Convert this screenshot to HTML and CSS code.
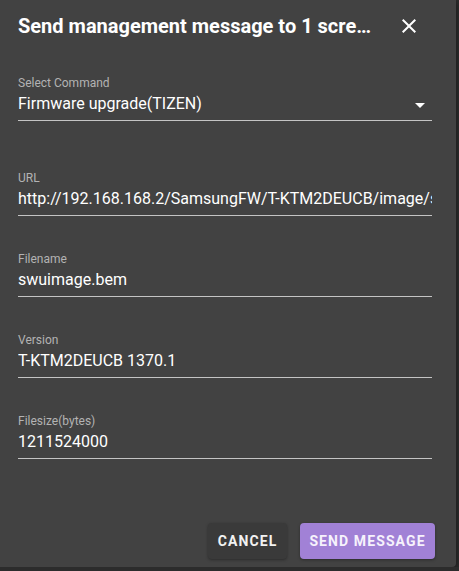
FILE: index.html
```html
<!DOCTYPE html>
<html>
<head>
<meta charset="utf-8">
<link rel="stylesheet" href="styles.css">
</head>
<body>
<div class="dialog">
  <div class="title-row">
    <div class="title">Send management message to 1 screens</div>
    <svg class="close" viewBox="0 0 24 24" width="24" height="24"><path d="M19 6.41L17.59 5 12 10.59 6.41 5 5 6.41 10.59 12 5 17.59 6.41 19 12 13.41 17.59 19 19 17.59 13.41 12z" fill="#fff"/></svg>
  </div>
  <div class="content">
    <div class="field select">
      <div class="label">Select Command</div>
      <div class="value">Firmware upgrade(TIZEN)</div>
      <svg class="arrow" viewBox="0 0 24 24" width="24" height="24"><path d="M7 10l5 5 5-5z" fill="#fff"/></svg>
    </div>
    <div class="field first">
      <div class="label">URL</div>
      <div class="value">http://192.168.168.2/SamsungFW/T-KTM2DEUCB/image/swuimage.bem</div>
    </div>
    <div class="field">
      <div class="label">Filename</div>
      <div class="value">swuimage.bem</div>
    </div>
    <div class="field">
      <div class="label">Version</div>
      <div class="value">T-KTM2DEUCB 1370.1</div>
    </div>
    <div class="field">
      <div class="label">Filesize(bytes)</div>
      <div class="value">1211524000</div>
    </div>
  </div>
  <div class="actions">
    <button class="btn cancel">Cancel</button>
    <button class="btn send">Send message</button>
  </div>
</div>
</body>
</html>
```
FILE: styles.css
```css
html, body {
  margin: 0;
  padding: 0;
  background: #2c2c2c;
  font-family: Roboto, "Liberation Sans", sans-serif;
}
.dialog {
  width: 456px;
  height: 567px;
  background: #424242;
  border-radius: 0 0 4px 0;
  display: flex;
  flex-direction: column;
  box-sizing: border-box;
  box-shadow: 0 2px 6px rgba(0,0,0,0.5);
}
.title-row {
  display: flex;
  align-items: center;
  padding: 14px 0 0 18px;
  height: 24px;
}
.title {
  width: 363px;
  color: #fff;
  font-size: 20px;
  font-weight: 700;
  line-height: 24px;
  white-space: nowrap;
  overflow: hidden;
  text-overflow: ellipsis;
}
.close {
  margin-left: 16px;
  flex: none;
}
.content {
  padding: 39px 24px 0 18px;
  display: flex;
  flex-direction: column;
}
.field {
  position: relative;
  padding-bottom: 7px;
  border-bottom: 1px solid #c4c4c4;
  margin-top: 37px;
}
.field.select {
  margin-top: 0;
}
.field.first {
  margin-top: 51px;
}
.label {
  font-size: 12px;
  line-height: 12px;
  color: #b3b3b3;
}
.value {
  margin-top: 5px;
  font-size: 16px;
  line-height: 19px;
  color: #fff;
  white-space: nowrap;
  overflow: hidden;
}
.select .value {
  padding-right: 24px;
}
.arrow {
  position: absolute;
  right: 0;
  top: 16px;
}
.actions {
  margin-top: auto;
  display: flex;
  justify-content: flex-end;
  gap: 13px;
  padding: 0 21px 8px 0;
}
.btn {
  font-family: Roboto, "Liberation Sans", sans-serif;
  font-size: 14px;
  font-weight: 700;
  letter-spacing: 1.1px;
  text-transform: uppercase;
  white-space: nowrap;
  height: 36px;
  border: none;
  border-radius: 4px;
  padding: 0;
  cursor: pointer;
}
.cancel {
  background: #3a3a3a;
  color: #f2f2f2;
  width: 79px;
  box-shadow: 0 1px 3px rgba(0,0,0,0.35);
}
.send {
  background: #a181d6;
  color: #f6f2fc;
  width: 135px;
  box-shadow: 0 1px 3px rgba(0,0,0,0.35);
}
```
